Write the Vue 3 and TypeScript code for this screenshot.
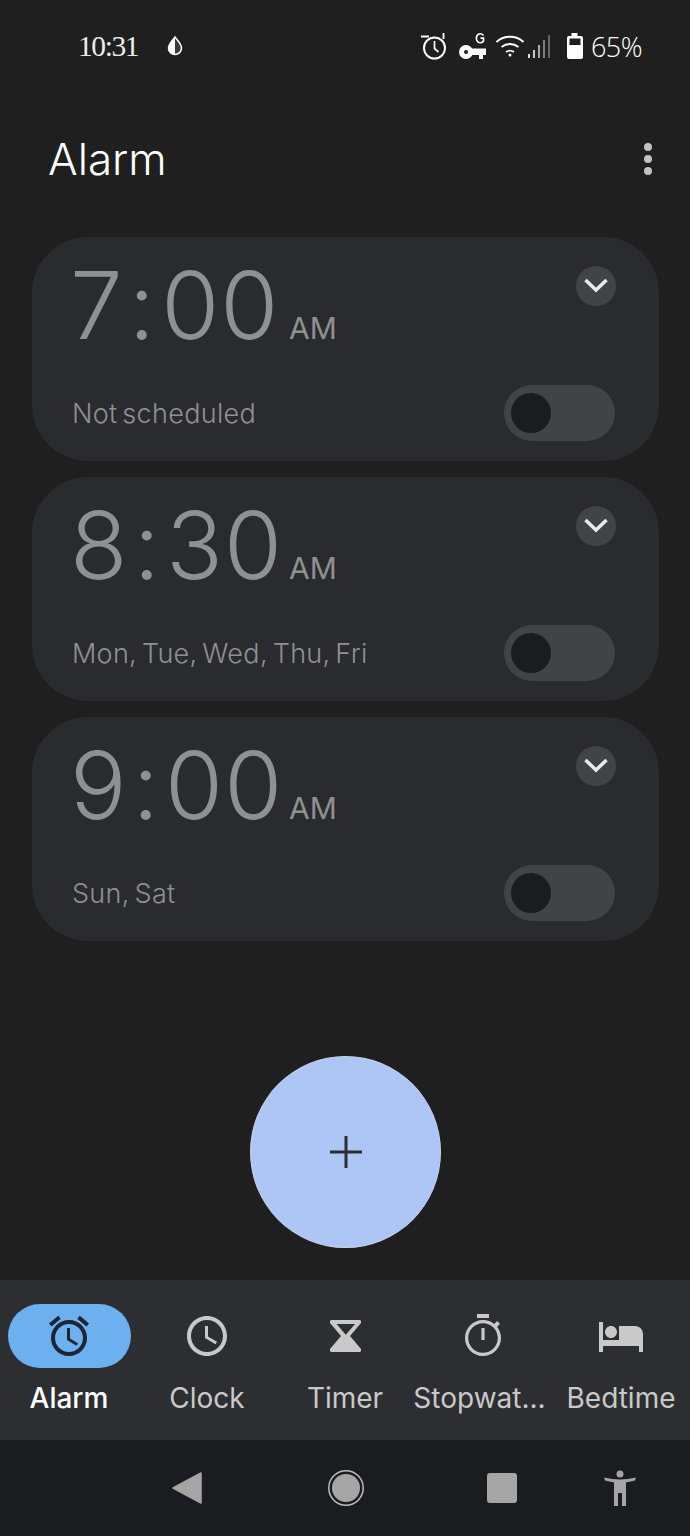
<script setup lang="ts">
interface Alarm {
  hour: string
  days: string
}

interface Tab {
  label: string
  path: string
  active?: boolean
}

const alarms: Alarm[] = [
  { hour: '7:00', days: 'Not scheduled' },
  { hour: '8:30', days: 'Mon, Tue, Wed, Thu, Fri' },
  { hour: '9:00', days: 'Sun, Sat' }
]

const tabs: Tab[] = [
  {
    label: 'Alarm',
    active: true,
    path: 'M22 5.72l-4.6-3.86-1.29 1.53 4.6 3.86L22 5.72zM7.88 3.39L6.6 1.86 2 5.71l1.29 1.53 4.59-3.85zM12.5 8H11v6l4.75 2.85.75-1.23-4-2.37V8zM12 4c-4.97 0-9 4.03-9 9s4.03 9 9 9 9-4.03 9-9-4.03-9-9-9zm0 16c-3.87 0-7-3.13-7-7s3.13-7 7-7 7 3.13 7 7-3.13 7-7 7z'
  },
  {
    label: 'Clock',
    path: 'M11.99 2C6.47 2 2 6.48 2 12s4.47 10 9.99 10C17.52 22 22 17.52 22 12S17.52 2 11.99 2zM12 20c-4.42 0-8-3.58-8-8s3.58-8 8-8 8 3.58 8 8-3.58 8-8 8zm.5-13H11v6l5.25 3.15.75-1.23-4.5-2.67z'
  },
  {
    label: 'Timer',
    path: 'M5 4h14.500l.5.5v1L14.500 12l5.500 6.500v1l-.5.5H5l-.5-.5v-1L10 12 4.500 5.500v-1zM7.800 6h9.200l-4.600 5.400z'
  },
  {
    label: 'Stopwat...',
    path: 'M15 1H9v2h6V1zm-3.800 13h1.600V8h-1.600v6zm7.830-6.610l1.420-1.420c-.43-.51-.9-.99-1.410-1.410l-1.420 1.420C16.070 4.740 14.120 4 12 4c-4.970 0-9 4.030-9 9s4.020 9 9 9 9-4.030 9-9c0-2.120-.74-4.070-1.970-5.610zM12 20.400c-4.090 0-7.400-3.310-7.400-7.400s3.310-7.400 7.400-7.400 7.400 3.310 7.400 7.400-3.310 7.400-7.400 7.400z'
  },
  {
    label: 'Bedtime',
    path: 'M7 13c1.660 0 3-1.340 3-3S8.660 7 7 7s-3 1.340-3 3 1.340 3 3 3zm12-6h-8v7H3V5H1v15h2v-3h18v3h2v-9c0-2.210-1.790-4-4-4z'
  }
]
</script>

<template>
  <div class="screen">
    <div class="status">
      <div class="status-left">
        <span class="status-time">10:31</span>
        <svg class="drop" width="16" height="22" viewBox="0 0 16 22">
          <path d="M8 2C5 6 1.500 9 1.500 13a6.500 6.500 0 0 0 13 0C14.500 9 11 6 8 2z" fill="#3a3a3a" stroke="#fff" stroke-width="1.500" />
          <path d="M8 2v17.500A6.500 6.500 0 0 1 1.500 13C1.500 9 5 6 8 2z" fill="#fff" />
        </svg>
      </div>
      <div class="status-right">
        <svg class="ic-alarm" width="28" height="28" viewBox="0 0 28 28" fill="none" stroke="#fff" stroke-width="2">
          <circle cx="15.500" cy="16" r="10.500" />
          <path d="M15.500 9v7.500l4 3.500" stroke-width="1.700" />
          <path d="M2 4.500h8M24.500 1v6" stroke-width="1.800" />
        </svg>
        <svg class="ic-key" width="30" height="28" viewBox="0 0 30 28">
          <circle cx="9" cy="20" r="4.500" fill="none" stroke="#fff" stroke-width="5" />
          <path d="M14 16.500h15v6.500h-3v4h-4v-4h-8z" fill="#fff" />
          <path d="M26.500 3.500a4 4.500 0 1 0 0 5.500v-2.800h-3" fill="none" stroke="#fff" stroke-width="1.700" />
        </svg>
        <svg class="ic-wifi" width="30" height="26" viewBox="0 0 30 26" fill="none" stroke="#fff" stroke-width="1.800">
          <path d="M1.500 9C9 2 21 2 28.500 9" />
          <path d="M6.500 14C11.500 10 18.500 10 23.500 14" />
          <path d="M11 19c2.500-1.800 5.500-1.800 8 0" />
          <circle cx="15" cy="22" r="1.500" fill="#fff" stroke="none" />
        </svg>
        <svg class="ic-signal" width="24" height="26" viewBox="0 0 24 26">
          <rect x="1" y="21" width="2" height="4" fill="#e0e0e0" />
          <rect x="6" y="17" width="2" height="8" fill="#c8c8c8" />
          <rect x="11" y="12" width="2" height="13" fill="#a8a8a8" />
          <rect x="16" y="7" width="2" height="18" fill="#808080" />
          <rect x="21" y="2" width="2" height="23" fill="#666" />
        </svg>
        <svg class="ic-battery" width="18" height="28" viewBox="0 0 18 28">
          <path d="M5.500 1h6v3h3.500a2 2 0 0 1 2 2v19a2 2 0 0 1-2 2H3a2 2 0 0 1-2-2V6a2 2 0 0 1 2-2h2.500z" fill="#fff" />
          <rect x="3.500" y="6.500" width="11" height="6.500" fill="#1f1f1f" />
        </svg>
        <span class="status-pct">65%</span>
      </div>
    </div>

    <header class="title-bar">
      <h1 class="title">Alarm</h1>
      <div class="more">
        <span></span>
        <span></span>
        <span></span>
      </div>
    </header>

    <main class="cards">
      <section v-for="alarm in alarms" :key="alarm.hour" class="card">
        <div class="card-top">
          <div class="time">
            <span class="hour">{{ alarm.hour.split(':')[0] }}<span class="colon">:</span>{{ alarm.hour.split(':')[1] }}</span>
            <span class="ampm">AM</span>
          </div>
          <button class="expand">
            <svg width="26" height="18" viewBox="0 0 26 18" fill="none" stroke="#e8eaed" stroke-width="3.500">
              <path d="M2.500 3 13 13l10.500-10" />
            </svg>
          </button>
        </div>
        <div class="card-bottom">
          <span class="days">{{ alarm.days }}</span>
          <div class="switch"><span class="thumb"></span></div>
        </div>
      </section>
    </main>

    <div class="fab-area">
      <button class="fab">
        <svg width="34" height="34" viewBox="0 0 34 34" stroke="#2c2d30" stroke-width="3">
          <path d="M17 1v32M1 17h32" />
        </svg>
      </button>
    </div>

    <nav class="tabs">
      <div v-for="tab in tabs" :key="tab.label" class="tab" :class="{ 'tab--active': tab.active }">
        <div class="tab-icon">
          <svg width="48" height="48" viewBox="0 0 24 24">
            <path :d="tab.path" fill-rule="evenodd" />
          </svg>
        </div>
        <span class="tab-label">{{ tab.label }}</span>
      </div>
    </nav>

    <footer class="sysnav">
      <svg width="30" height="34" viewBox="0 0 30 34">
        <path d="M29 2v30L1 17z" fill="#a5a5a5" stroke="#a5a5a5" stroke-linejoin="round" stroke-width="1.500" />
      </svg>
      <svg class="sys-home" width="36" height="36" viewBox="0 0 36 36">
        <circle cx="18" cy="18" r="17.200" fill="none" stroke="#bdbdbd" stroke-width="1.500" />
        <circle cx="18" cy="18" r="14" fill="#a5a5a5" />
      </svg>
      <div class="sys-square"></div>
      <svg class="sys-person" width="32" height="36" viewBox="0 0 32 36" fill="#a5a5a5">
        <circle cx="16" cy="4" r="3.500" />
        <path d="M0 7.500 1 10.500 10 12.500V36h4V23h4v13h4V12.500l9-2 1-3c-6 1-11 2-16 2S6 8.500 0 7.500z" />
      </svg>
    </footer>
  </div>
</template>

<style>
html,
body {
  margin: 0;
  background: #1f1f1f;
}
</style>

<style scoped>
.screen {
  display: flex;
  flex-direction: column;
  width: 690px;
  height: 1536px;
  overflow: hidden;
  background: #1f1f1f;
  font-family: Inter, sans-serif;
  color: #fff;
}

.status {
  display: flex;
  justify-content: space-between;
  align-items: center;
  height: 28px;
  padding: 32px 48px 63px 78px;
}

.status-left,
.status-right {
  display: flex;
  align-items: center;
}

.status-time {
  font-family: "Liberation Serif", serif;
  font-size: 29.500px;
  letter-spacing: -1.400px;
  color: #ececec;
}

.drop {
  margin-left: 29px;
}

.ic-key {
  margin-left: 10px;
}

.ic-wifi {
  margin-left: 8px;
}

.ic-signal {
  margin-left: 2px;
}

.ic-battery {
  margin-left: 15px;
}

.status-pct {
  margin-left: 7px;
  font-family: "Open Sans", sans-serif;
  font-size: 27px;
  font-weight: 300;
  letter-spacing: -0.5px;
}

.title-bar {
  display: flex;
  justify-content: space-between;
  align-items: center;
  height: 72px;
  padding: 0 38px 0 48px;
}

.title {
  margin: 0;
  font-size: 44px;
  font-weight: 300;
  line-height: 72px;
}

.more {
  display: flex;
  flex-direction: column;
  gap: 4px;
}

.more span {
  width: 8px;
  height: 8px;
  border-radius: 50%;
  background: #c4c4c4;
}

.cards {
  display: flex;
  flex-direction: column;
  gap: 16px;
  margin-top: 42px;
  padding: 0 31px 0 32px;
}

.card {
  display: flex;
  flex-direction: column;
  justify-content: space-between;
  box-sizing: border-box;
  height: 224px;
  padding: 29px 43px 20px 40px;
  border-radius: 56px;
  background: #2a2b2f;
}

.card-top,
.card-bottom {
  display: flex;
  justify-content: space-between;
}

.card-bottom {
  align-items: center;
}

.time {
  display: flex;
  align-items: baseline;
  color: #8f9190;
}

.hour {
  width: 207px;
  margin-left: -2px;
  font-size: 94px;
  font-weight: 350;
  line-height: 78px;
  letter-spacing: 1px;
  white-space: nowrap;
}

.colon {
  margin: 0 5px;
}

.ampm {
  margin-left: 12px;
  font-size: 30px;
}

.expand {
  display: flex;
  justify-content: center;
  align-items: center;
  width: 40px;
  height: 40px;
  padding: 0;
  border: 0;
  border-radius: 50%;
  background: #414445;
}

.days {
  font-size: 27px;
  font-weight: 300;
  letter-spacing: 0.3px;
  word-spacing: -3px;
  color: #8f9190;
}

.switch {
  display: flex;
  align-items: center;
  box-sizing: border-box;
  width: 111px;
  height: 56px;
  margin-right: 1px;
  padding: 0 7px;
  border-radius: 28px;
  background: #414445;
}

.thumb {
  width: 40px;
  height: 40px;
  border-radius: 50%;
  background: #1b1c20;
}

.fab-area {
  display: flex;
  flex: 1;
  justify-content: center;
  align-items: flex-end;
  padding-bottom: 32px;
}

.fab {
  display: flex;
  justify-content: center;
  align-items: center;
  box-sizing: border-box;
  width: 191px;
  height: 192px;
  margin-left: 1px;
  padding: 0;
  border: 1px solid #c5d2e8;
  border-radius: 50%;
  background: #aec6f5;
}

.tabs {
  display: grid;
  grid-template-columns: repeat(5, 1fr);
  box-sizing: border-box;
  height: 160px;
  padding-top: 24px;
  background: #2d2e32;
}

.tab {
  display: flex;
  flex-direction: column;
  align-items: center;
  min-width: 0;
}

.tab:nth-child(4) .tab-label {
  margin-right: 7px;
}

.tab-icon {
  display: flex;
  justify-content: center;
  align-items: center;
  width: 123px;
  height: 64px;
  border-radius: 32px;
  fill: #c8c9c8;
}

.tab--active .tab-icon {
  background: #6cb0f0;
  fill: #1d2530;
}

.tab-label {
  margin-top: 10px;
  font-size: 28px;
  line-height: 40px;
  white-space: nowrap;
  color: #c8c9c8;
}

.tab--active .tab-label {
  font-weight: 500;
  color: #fff;
}

.sysnav {
  display: flex;
  align-items: center;
  box-sizing: border-box;
  height: 96px;
  padding-left: 172px;
  background: #1b1c20;
}

.sys-home {
  margin-left: 126px;
}

.sys-square {
  width: 30px;
  height: 30px;
  margin-left: 123px;
  border-radius: 3px;
  background: #a5a5a5;
}

.sys-person {
  margin-left: 87px;
}
</style>
